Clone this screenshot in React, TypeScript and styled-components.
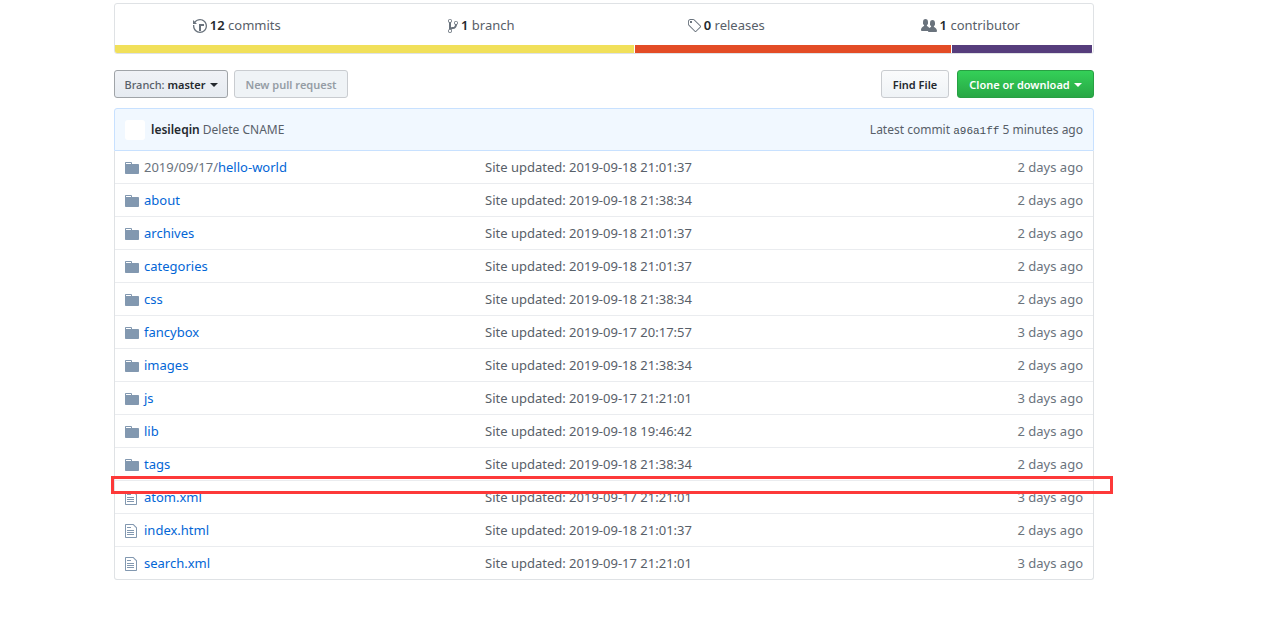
import React from "react";
import styled, { createGlobalStyle, css } from "styled-components";

const GlobalStyle = createGlobalStyle`
  * { box-sizing: border-box; }
  body {
    margin: 0;
    background: #fff;
    color: #586069;
    font-family: "Noto Sans", "Open Sans", sans-serif;
    font-size: 13px;
    line-height: 20px;
  }
  a { color: #0366d6; text-decoration: none; }
`;

const Page = styled.main`
  padding: 3px 182px 44px 114px;
`;

const Summary = styled.section`
  border: 1px solid #dfe2e5;
  border-radius: 3px;
  overflow: hidden;
`;

const StatList = styled.ul`
  display: flex;
  margin: 0;
  padding: 0;
  list-style: none;
`;

const Stat = styled.li`
  flex: 1;
`;

const StatLink = styled.a`
  display: flex;
  align-items: center;
  justify-content: center;
  gap: 3px;
  height: 41px;
  padding-right: 1px;
  color: #586069;

  svg {
    margin-top: 2px;
    color: #6a737d;
  }
`;

const StatCount = styled.strong`
  color: #24292e;
  font-weight: 600;
`;

const LanguageBar = styled.div`
  display: flex;
  gap: 1px;
  height: 8px;
  padding-right: 1px;
`;

const Language = styled.span<{ $share: number; $color: string }>`
  flex: ${(p) => p.$share} 1 0;
  background: ${(p) => p.$color};
`;

const Toolbar = styled.div`
  display: flex;
  align-items: center;
  justify-content: space-between;
  margin: 16px 0 10px;
`;

const ButtonGroup = styled.div<{ $gap: number }>`
  display: flex;
  gap: ${(p) => p.$gap}px;
`;

const variants = {
  plain: css`
    color: #24292e;
    border-color: #c9ccd0;
    background: linear-gradient(#fafbfc, #eff3f6);
  `,
  branch: css`
    color: #24292e;
    border-color: #a0a4a8;
    background: linear-gradient(#f0f2f6, #e6ebf1);
  `,
  disabled: css`
    color: #959da5;
    border-color: #c9ccd0;
    background: #eff3f6;
  `,
  primary: css`
    color: #fff;
    border-color: #28a043;
    background: linear-gradient(#34d058, #28a745);
  `,
};

const Button = styled.button<{ $variant: keyof typeof variants; $width: number }>`
  display: flex;
  align-items: center;
  justify-content: center;
  gap: 4px;
  width: ${(p) => p.$width}px;
  height: 28px;
  padding: 2px 0 0;
  border: 1px solid;
  border-radius: 3px;
  font: 600 11px/20px "Noto Sans", "Open Sans", sans-serif;
  white-space: nowrap;
  ${(p) => variants[p.$variant]}
`;

const Muted = styled.span`
  color: #586069;
  font-weight: 500;
`;

const Caret = styled.span`
  border: 4px solid transparent;
  border-top-color: currentColor;
  border-bottom: 0;
`;

const Listing = styled.section`
  position: relative;
`;

const LatestCommit = styled.header`
  display: flex;
  align-items: center;
  height: 43px;
  padding: 0 10px;
  border: 1px solid #c8e1ff;
  border-radius: 3px 3px 0 0;
  background: #f1f8ff;
  font-size: 12px;
`;

const Avatar = styled.span`
  width: 20px;
  height: 20px;
  margin-right: 6px;
  border-radius: 3px;
  background: #fff;
`;

const Author = styled.a`
  color: #24292e;
  font-weight: 600;
`;

const CommitAge = styled.span`
  margin-left: auto;
`;

const Sha = styled.a`
  color: #444d56;
  font: 11px "Liberation Mono", monospace;
`;

const FileBox = styled.div`
  border: 1px solid #dfe2e5;
  border-top: 0;
  border-radius: 0 0 3px 3px;
`;

const FileTable = styled.table`
  width: 100%;
  border-collapse: separate;
  border-spacing: 0;
  table-layout: fixed;
`;

const FileRow = styled.tr`
  & + & td { border-top: 1px solid #eaecef; }
  &:first-child td { height: 32px; }
`;

const Cell = styled.td<{ $width?: number; $age?: boolean }>`
  width: ${(p) => (p.$width ? `${p.$width}px` : "auto")};
  height: 33px;
  padding: 0;
  ${(p) =>
    p.$age &&
    css`
      padding-right: 10px;
      color: #6a737d;
      text-align: right;
    `}
`;

const FileName = styled.div`
  display: flex;
  align-items: center;
  padding-left: 10px;
`;

const IconSlot = styled.span`
  display: flex;
  width: 19px;
  padding-top: 2px;
  color: #8298b0;
`;

const PathPrefix = styled.span`
  color: #6a737d;
`;

const Highlight = styled.div`
  position: absolute;
  top: 368px;
  right: -19px;
  left: -3px;
  height: 18px;
  border: 3px solid #fd3939;
  pointer-events: none;
`;

const icons = {
  history: {
    width: 14,
    d: "M8 13H6V6h5v2H8v5zM7 1C4.81 1 2.87 2.02 1.59 3.59L0 2v4h4L2.5 4.5C3.55 3.17 5.17 2.3 7 2.3c3.14 0 5.7 2.56 5.7 5.7s-2.56 5.7-5.7 5.7A5.71 5.71 0 0 1 1.3 8c0-.34.03-.67.09-1H.08C.03 7.33 0 7.66 0 8c0 3.86 3.14 7 7 7s7-3.14 7-7-3.14-7-7-7z",
  },
  branch: {
    width: 10,
    d: "M10 5c0-1.11-.89-2-2-2a1.993 1.993 0 0 0-1 3.72v.3c-.02.52-.23.98-.63 1.38-.4.4-.86.61-1.38.63-.83.02-1.48.16-2 .45V4.72a1.993 1.993 0 0 0-1-3.72C.88 1 0 1.89 0 3a2 2 0 0 0 1 1.72v6.56c-.59.35-1 .99-1 1.72 0 1.11.89 2 2 2 1.11 0 2-.89 2-2 0-.53-.2-1-.53-1.36.09-.06.48-.41.59-.47.25-.11.56-.17.94-.17 1.05-.05 1.95-.45 2.75-1.25S8.95 7.77 9 6.73h-.02C9.59 6.37 10 5.73 10 5zM2 1.8c.66 0 1.2.55 1.2 1.2 0 .65-.55 1.2-1.2 1.2C1.35 4.2.8 3.65.8 3c0-.65.55-1.2 1.2-1.2zm0 12.41c-.66 0-1.2-.55-1.2-1.2 0-.65.55-1.2 1.2-1.2.65 0 1.2.55 1.2 1.2 0 .65-.55 1.2-1.2 1.2zm6-8c-.66 0-1.2-.55-1.2-1.2 0-.65.55-1.2 1.2-1.2.65 0 1.2.55 1.2 1.2 0 .65-.55 1.2-1.2 1.2z",
  },
  tag: {
    width: 14,
    d: "M7.73 1.73C7.26 1.26 6.62 1 5.96 1H3.5C2.13 1 1 2.13 1 3.5v2.47c0 .66.27 1.3.73 1.77l6.06 6.06c.39.39 1.02.39 1.41 0l4.59-4.59a.996.996 0 0 0 0-1.41L7.73 1.73zM2.38 7.09c-.31-.3-.47-.7-.47-1.13V3.5c0-.88.72-1.59 1.59-1.59h2.47c.42 0 .83.16 1.13.47l6.14 6.13-4.73 4.73-6.13-6.15zM3.01 3h2v2H3V3h.01z",
  },
  people: {
    width: 16,
    d: "M16 12.999c0 .439-.45 1-1 1H7.995c-.539 0-.994-.447-.995-.999H1c-.54 0-1-.561-1-1 0-2.634 3-4 3-4s.229-.409 0-1c-.841-.621-1.058-.59-1-3 .058-2.419 1.367-3 2.5-3s2.442.58 2.5 3c.058 2.41-.159 2.379-1 3-.229.59 0 1 0 1s1.549.711 2.42 2.088C9.196 9.369 10 8.999 10 8.999s.229-.409 0-1c-.841-.62-1.058-.59-1-3 .058-2.419 1.367-3 2.5-3s2.437.581 2.495 3c.059 2.41-.158 2.38-1 3-.229.59 0 1 0 1s3.005 1.366 3.005 4z",
  },
  folder: {
    width: 14,
    d: "M13 4H7V3c0-.66-.31-1-1-1H1c-.55 0-1 .45-1 1v10c0 .55.45 1 1 1h12c.55 0 1-.45 1-1V5c0-.55-.45-1-1-1zM6 4H1V3h5v1z",
  },
  file: {
    width: 12,
    d: "M6 5H2V4h4v1zM2 8h7V7H2v1zm0 2h7V9H2v1zm0 2h7v-1H2v1zm10-7.5V14c0 .55-.45 1-1 1H1c-.55 0-1-.45-1-1V2c0-.55.45-1 1-1h7.5L12 4.5zM11 5L8 2H1v12h10V5z",
  },
};

type IconName = keyof typeof icons;

const Icon = ({ name }: { name: IconName }) => (
  <svg
    width={icons[name].width}
    height={16}
    viewBox={`0 0 ${icons[name].width} 16`}
    fill="currentColor"
    fillRule="evenodd"
    aria-hidden="true"
  >
    <path d={icons[name].d} />
  </svg>
);

const stats: { icon: IconName; count: number; label: string }[] = [
  { icon: "history", count: 12, label: "commits" },
  { icon: "branch", count: 1, label: "branch" },
  { icon: "tag", count: 0, label: "releases" },
  { icon: "people", count: 1, label: "contributor" },
];

const languages = [
  { name: "JavaScript", share: 519, color: "#f1e05a" },
  { name: "HTML", share: 316, color: "#e34c26" },
  { name: "CSS", share: 140, color: "#563d7c" },
];

const files: { icon: IconName; prefix?: string; name: string; updated: string; age: number }[] = [
  { icon: "folder", prefix: "2019/09/17/", name: "hello-world", updated: "2019-09-18 21:01:37", age: 2 },
  { icon: "folder", name: "about", updated: "2019-09-18 21:38:34", age: 2 },
  { icon: "folder", name: "archives", updated: "2019-09-18 21:01:37", age: 2 },
  { icon: "folder", name: "categories", updated: "2019-09-18 21:01:37", age: 2 },
  { icon: "folder", name: "css", updated: "2019-09-18 21:38:34", age: 2 },
  { icon: "folder", name: "fancybox", updated: "2019-09-17 20:17:57", age: 3 },
  { icon: "folder", name: "images", updated: "2019-09-18 21:38:34", age: 2 },
  { icon: "folder", name: "js", updated: "2019-09-17 21:21:01", age: 3 },
  { icon: "folder", name: "lib", updated: "2019-09-18 19:46:42", age: 2 },
  { icon: "folder", name: "tags", updated: "2019-09-18 21:38:34", age: 2 },
  { icon: "file", name: "atom.xml", updated: "2019-09-17 21:21:01", age: 3 },
  { icon: "file", name: "index.html", updated: "2019-09-18 21:01:37", age: 2 },
  { icon: "file", name: "search.xml", updated: "2019-09-17 21:21:01", age: 3 },
];

export default function App() {
  return (
    <>
      <GlobalStyle />
      <Page>
        <Summary>
          <StatList>
            {stats.map((s) => (
              <Stat key={s.label}>
                <StatLink href="#">
                  <Icon name={s.icon} />
                  <span>
                    <StatCount>{s.count}</StatCount> {s.label}
                  </span>
                </StatLink>
              </Stat>
            ))}
          </StatList>
          <LanguageBar>
            {languages.map((l) => (
              <Language key={l.name} $share={l.share} $color={l.color} />
            ))}
          </LanguageBar>
        </Summary>

        <Toolbar>
          <ButtonGroup $gap={6}>
            <Button type="button" $variant="branch" $width={114}>
              <span>
                <Muted>Branch:</Muted> master
              </span>
              <Caret />
            </Button>
            <Button type="button" disabled $variant="disabled" $width={114}>
              New pull request
            </Button>
          </ButtonGroup>
          <ButtonGroup $gap={8}>
            <Button type="button" $variant="plain" $width={68}>
              Find File
            </Button>
            <Button type="button" $variant="primary" $width={137}>
              Clone or download
              <Caret />
            </Button>
          </ButtonGroup>
        </Toolbar>

        <Listing>
          <LatestCommit>
            <Avatar />
            <span>
              <Author href="#">lesileqin</Author> Delete CNAME
            </span>
            <CommitAge>
              Latest commit <Sha href="#">a96a1ff</Sha> 5 minutes ago
            </CommitAge>
          </LatestCommit>
          <FileBox>
            <FileTable>
              <tbody>
                {files.map((f) => (
                  <FileRow key={f.name}>
                    <Cell $width={370}>
                      <FileName>
                        <IconSlot>
                          <Icon name={f.icon} />
                        </IconSlot>
                        <a href="#">
                          {f.prefix && <PathPrefix>{f.prefix}</PathPrefix>}
                          {f.name}
                        </a>
                      </FileName>
                    </Cell>
                    <Cell>Site updated: {f.updated}</Cell>
                    <Cell $width={120} $age>
                      {f.age} days ago
                    </Cell>
                  </FileRow>
                ))}
              </tbody>
            </FileTable>
          </FileBox>
          <Highlight />
        </Listing>
      </Page>
    </>
  );
}
